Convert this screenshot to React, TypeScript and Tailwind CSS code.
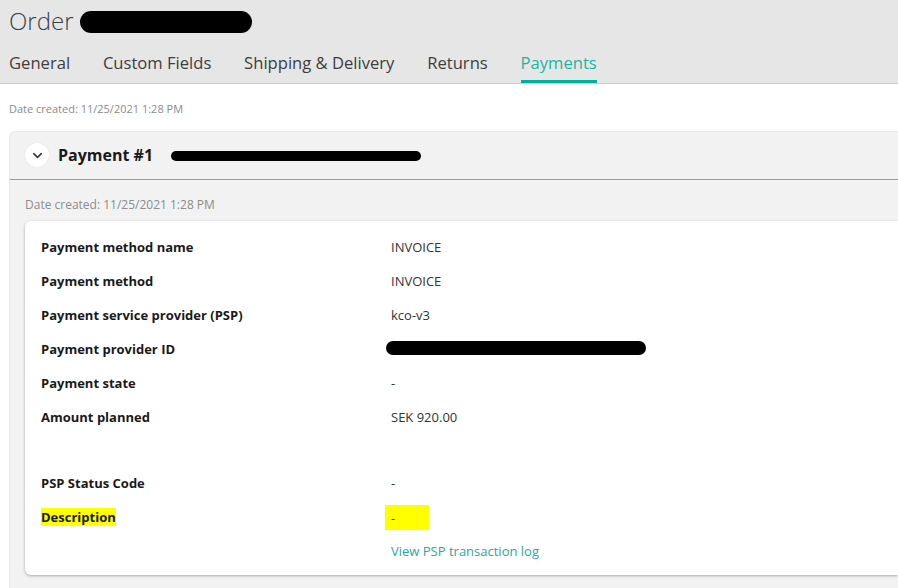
import React from 'react';
import { ChevronDown } from 'lucide-react';

const tabs = ['General', 'Custom Fields', 'Shipping & Delivery', 'Returns', 'Payments'];

type Row = { label: string; value?: React.ReactNode; highlight?: boolean; h?: string };

const Scribble: React.FC<{ className: string }> = ({ className }) => (
  <span className={`inline-block bg-black rounded-full ${className}`} />
);

const rows: Row[] = [
  { label: 'Payment method name', value: 'INVOICE' },
  { label: 'Payment method', value: 'INVOICE' },
  { label: 'Payment service provider (PSP)', value: 'kco-v3' },
  { label: 'Payment provider ID', value: <Scribble className="w-[260px] h-[14px] -ml-[5px] mt-[2px]" /> },
  { label: 'Payment state', value: '-' },
  { label: 'Amount planned', value: 'SEK 920.00' },
  { label: '', value: '', h: 'h-[32px]' },
  { label: 'PSP Status Code', value: '-' },
  {
    label: 'Description',
    highlight: true,
    value: <span className="inline-block bg-[#ffff00] -ml-[6px] pl-[6px] pr-[34px] pt-[4px] pb-[1px]">-</span>,
  },
];

export default function App() {
  return (
    <div className="min-h-[588px] bg-white text-[#333] font-['Open_Sans',sans-serif] overflow-hidden">
      <div className="bg-[#e6e6e6] border-b border-[#cccccc]">
        <div className="h-[41px] flex items-center px-[9px] gap-[6px]">
          <span className="text-[24px] font-light text-[#3a3f4a] leading-none">Order</span>
          <Scribble className="w-[172px] h-[22px] mt-[2px]" />
        </div>
        <div className="flex gap-[32.8px] px-[9px] pt-[10px]">
          {tabs.map((t) => (
            <div
              key={t}
              className={`text-[16.6px] leading-[24px] pb-[5px] border-b-[3px] ${
                t === 'Payments' ? 'border-[#00b09b] text-[#1fb3a1]' : 'border-transparent text-[#3d3d3d]'
              }`}
            >
              {t}
            </div>
          ))}
        </div>
      </div>

      <div className="px-[9px] pt-[17px] text-[11px] text-[#8c8c8c]">Date created: 11/25/2021 1:28 PM</div>

      <div className="ml-[9px] mt-[13px] bg-[#f2f2f2] rounded-tl-[6px] border-l border-t border-[#e8e8e8]">
        <div className="h-[48px] flex items-center pl-[15px] border-b border-[#999999]">
          <div className="w-[24px] h-[24px] rounded-full bg-white flex items-center justify-center shadow-[0_0_1px_rgba(0,0,0,0.15)]">
            <ChevronDown className="w-[15px] h-[15px] text-[#333]" strokeWidth={2.4} />
          </div>
          <span className="ml-[9px] text-[16px] font-bold text-[#1a1a1a]">Payment #1</span>
          <Scribble className="ml-[18px] w-[250px] h-[10px] mt-[1px]" />
        </div>

        <div className="pl-[15px] pt-[17px] text-[12px] text-[#8c8c8c] leading-[16px]">
          Date created: 11/25/2021 1:28 PM
        </div>

        <div className="ml-[15px] mt-[8px] mb-[12px] bg-white rounded-l-[6px] shadow-[0_1px_3px_rgba(0,0,0,0.3)] pt-[10px] pb-[6px] pl-[16px]">
          {rows.map((r, i) => (
            <div key={i} className={`flex items-center text-[13px] ${r.h ?? 'h-[34px]'}`}>
              <div className="w-[350px] font-bold text-[#1a1a1a]">
                {r.highlight ? <span className="bg-[#ffff00]">{r.label}</span> : r.label}
              </div>
              <div className="text-[#333]">{r.value}</div>
            </div>
          ))}
          <div className="flex h-[34px] items-center text-[13px]">
            <div className="w-[350px]" />
            <a className="text-[#2aa89a]">View PSP transaction log</a>
          </div>
        </div>
        <div className="h-[20px]" />
      </div>
    </div>
  );
}
